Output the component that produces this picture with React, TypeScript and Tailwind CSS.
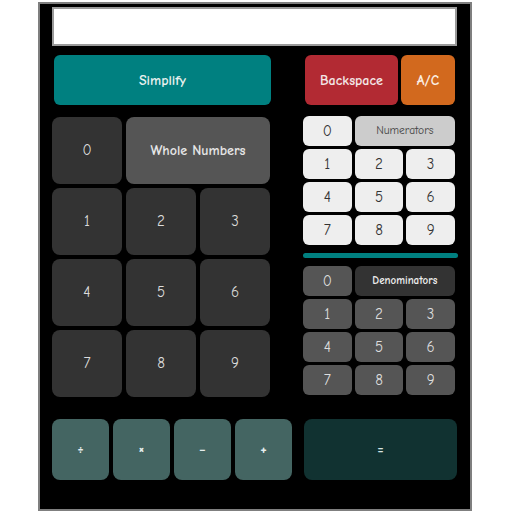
import React from 'react';

const font = "font-['Comic_Sans_MS','Comic_Neue','Open_Sans',sans-serif]";

export default function App() {
  const digits = ['1', '2', '3', '4', '5', '6', '7', '8', '9'];
  const ops = ['÷', '×', '−', '+'];

  return (
    <div className={`w-[512px] h-[512px] bg-white pt-[2px] ${font}`}>
      <div className="ml-[38px] w-[434px] h-[509px] border-2 border-[#7f7f7f] bg-black flex flex-col">
        {/* display */}
        <div className="mt-[3px] ml-[12px] w-[405px] h-[39px] bg-white border-2 border-[#9a9a9a]" />

        {/* top actions */}
        <div className="mt-[9px] flex h-[50px]">
          <button className="ml-[14px] w-[217px] rounded-md bg-[#008080] text-[#e8f0ee] text-[14px] font-semibold">
            Simplify
          </button>
          <button className="ml-[34px] w-[93px] rounded-md bg-[#b22a33] text-[#f3e6e6] text-[14px] font-semibold">
            Backspace
          </button>
          <button className="ml-[3px] w-[54px] rounded-md bg-[#d2691e] text-[#fbeee2] text-[14px] font-semibold">
            A/C
          </button>
        </div>

        {/* keypads */}
        <div className="mt-[11px] flex">
          <div className="mt-[1px] ml-[12px] w-[218px] grid grid-cols-3 auto-rows-[67px] gap-[4px]">
            <button className="rounded-lg bg-[#333333] text-[#dcdcdc] text-[15px]">0</button>
            <button className="col-span-2 rounded-lg bg-[#555555] text-[#e6e6e6] text-[14px] font-semibold">
              Whole Numbers
            </button>
            {digits.map((d) => (
              <button key={d} className="rounded-lg bg-[#333333] text-[#dcdcdc] text-[15px]">
                {d}
              </button>
            ))}
          </div>

          <div className="ml-[33px] w-[155px] flex flex-col">
            <div className="w-[152px] grid grid-cols-3 auto-rows-[30px] gap-[3px]">
              <button className="rounded-md bg-[#eeeeee] text-[#333333] text-[15px]">0</button>
              <button className="col-span-2 rounded-md bg-[#cccccc] text-[#444444] text-[11.5px]">
                Numerators
              </button>
              {digits.map((d) => (
                <button key={d} className="rounded-md bg-[#eeeeee] text-[#333333] text-[15px]">
                  {d}
                </button>
              ))}
            </div>

            <div className="mt-[8px] h-[5px] w-[155px] rounded-full bg-[#008080]" />

            <div className="mt-[8px] w-[152px] grid grid-cols-3 auto-rows-[30px] gap-[3px]">
              <button className="rounded-md bg-[#555555] text-[#dddddd] text-[15px]">0</button>
              <button className="col-span-2 rounded-md bg-[#333333] text-[#eeeeee] text-[11px] font-bold">
                Denominators
              </button>
              {digits.map((d) => (
                <button key={d} className="rounded-md bg-[#555555] text-[#dddddd] text-[15px]">
                  {d}
                </button>
              ))}
            </div>
          </div>
        </div>

        {/* operators */}
        <div className="mt-[22px] flex h-[61px]">
          <div className="ml-[12px] flex gap-[4px]">
            {ops.map((o) => (
              <button key={o} className="w-[57px] h-[61px] rounded-lg bg-[#446562] text-[#e6eeee] text-[15px] font-bold">
                {o}
              </button>
            ))}
          </div>
          <button className="ml-[12px] w-[153px] rounded-lg bg-[#113231] text-[#d8e4e2] text-[14px] font-bold">
            =
          </button>
        </div>
      </div>
    </div>
  );
}
